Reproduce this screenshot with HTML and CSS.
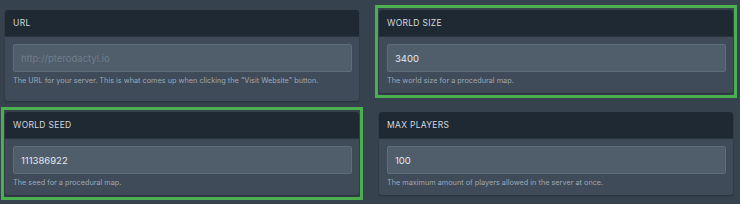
FILE: index.html
```html
<!DOCTYPE html>
<html lang="en">
<head>
    <meta charset="UTF-8">
    <meta name="viewport" content="width=device-width, initial-scale=1.0">
    <title>Startup Variables</title>
    <link rel="stylesheet" href="styles.css">
</head>
<body>
    <div class="grid">
        <div class="field">
            <div class="card tall">
                <div class="card-head">URL</div>
                <div class="card-body">
                    <input type="text" placeholder="http://pterodactyl.io">
                    <p class="help">The URL for your server. This is what comes up when clicking the "Visit Website" button.</p>
                </div>
            </div>
        </div>
        <div class="field active">
            <div class="card">
                <div class="card-head">World Size</div>
                <div class="card-body">
                    <input type="text" value="3400">
                    <p class="help">The world size for a procedural map.</p>
                </div>
            </div>
        </div>
        <div class="field active">
            <div class="card">
                <div class="card-head">World Seed</div>
                <div class="card-body">
                    <input type="text" value="111386922">
                    <p class="help">The seed for a procedural map.</p>
                </div>
            </div>
        </div>
        <div class="field">
            <div class="card">
                <div class="card-head">Max Players</div>
                <div class="card-body">
                    <input type="text" value="100">
                    <p class="help">The maximum amount of players allowed in the server at once.</p>
                </div>
            </div>
        </div>
    </div>
</body>
</html>
```

FILE: styles.css
```css
*{
    margin: 0;
    padding: 0;
    box-sizing: border-box;
}
body{
    background-color: #36424e;
    font-family: Inter, "Noto Sans", sans-serif;
    width: 740px;
    height: 204px;
    overflow: hidden;
}

.grid{
    display: grid;
    grid-template-columns: 362px 362px;
    column-gap: 12px;
    row-gap: 1px;
    padding: 5px 0 0 1px;
    align-items: start;
}

.field{
    border: 3px solid transparent;
    padding: 2px 1px;
}
.field.active{
    border-color: #4caf50;
}

.card{
    background-color: #3f4b58;
    border-radius: 3px;
    overflow: hidden;
    box-shadow: 0 1px 2px rgba(0, 0, 0, 0.25);
}
.card.tall{
    min-height: 91px;
}

.card-head{
    background-color: #1f2933;
    color: #d3d9df;
    height: 27px;
    line-height: 27px;
    padding-left: 8px;
    font-size: 8.5px;
    font-weight: 400;
    text-transform: uppercase;
    letter-spacing: 0.3px;
    border-bottom: 1px solid #2a343e;
}

.card-body{
    padding: 7px 7px 7px 8px;
}

.card-body input{
    display: block;
    width: 100%;
    height: 28px;
    background-color: #505d6a;
    border: 1px solid #5f6c79;
    border-radius: 2px;
    color: #e4e9ee;
    font-family: inherit;
    font-size: 9.5px;
    padding-left: 7px;
    outline: none;
}
.card-body input::placeholder{
    color: #6f7d8b;
}

.help{
    color: #9ca8b5;
    font-size: 7.3px;
    margin-top: 4px;
    line-height: 10px;
    white-space: nowrap;
}
```
